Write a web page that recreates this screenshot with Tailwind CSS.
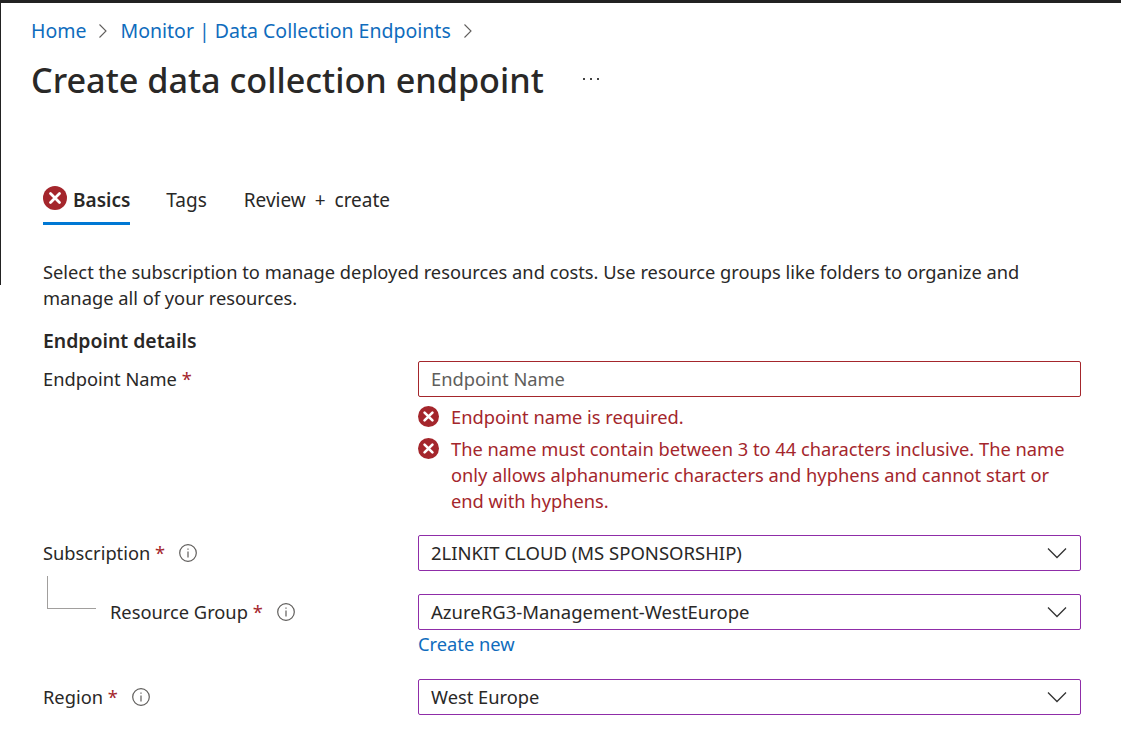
<!DOCTYPE html>
<html lang="en">

<head>
  <meta charset="UTF-8">
  <title>Create data collection endpoint</title>
  <script src="https://cdn.jsdelivr.net/npm/@tailwindcss/browser@4"></script>
</head>

<body class="bg-white overflow-hidden font-['Noto_Sans',sans-serif] text-[#292827] text-[18.3px] leading-[26px]">
  <div class="relative h-[747px] w-[1121px] overflow-hidden border-t-[3px] border-[#222222]">
    <!-- left edge of the window -->
    <div class="absolute left-0 top-0 h-[282px] w-px bg-[#222222]"></div>

    <!-- Breadcrumb -->
    <nav class="flex items-center h-[26px] mt-[15px] ml-[31px] text-[#0f6cbd] text-[19.500px]">
      <a>Home</a>
      <svg class="w-[12px] h-[16px] mx-[11px]" viewBox="0 0 12 16" fill="none" stroke="#605e5c" stroke-width="1.1"><path d="M2.5 1.5 9 8l-6.500 6.500" /></svg>
      <a>Monitor | Data Collection Endpoints</a>
      <svg class="w-[12px] h-[16px] ml-[11px]" viewBox="0 0 12 16" fill="none" stroke="#605e5c" stroke-width="1.1"><path d="M2.5 1.5 9 8l-6.500 6.500" /></svg>
    </nav>

    <!-- Title -->
    <div class="flex items-center mt-[12px] ml-[31px] h-[48px]">
      <h1 class="text-[34.200px] leading-[48px] font-medium">Create data collection endpoint</h1>
      <span class="ml-[39px] flex gap-[5px] mb-[2px]">
        <i class="w-[2px] h-[2px] bg-[#444]"></i><i class="w-[2px] h-[2px] bg-[#444]"></i><i class="w-[2px] h-[2px] bg-[#444]"></i>
      </span>
    </div>

    <!-- Tabs -->
    <div class="flex mt-[82px] ml-[43px] h-[39px] text-[19px]">
      <div class="flex gap-[6px] h-full border-b-[3px] border-[#0078d4] font-semibold">
        <svg class="w-[24px] h-[24px]" viewBox="0 0 24 24"><circle cx="12" cy="12" r="12" fill="#a4262c" /><path d="M7.500 7.500l9 9m0-9-9 9" stroke="#fff" stroke-width="2.800" stroke-linecap="round" /></svg>
        <span class="leading-[28px]">Basics</span>
      </div>
      <span class="ml-[36px] leading-[28px]">Tags</span>
      <span class="ml-[37px] leading-[28px] [word-spacing:4px]">Review + create</span>
    </div>

    <p class="mt-[34px] mx-[43px] w-[1000px]">Select the subscription to manage deployed resources and costs. Use resource groups like folders to organize and manage all of your resources.</p>

    <h2 class="mt-[17px] ml-[43px] font-semibold text-[19.400px]">Endpoint details</h2>

    <!-- Form -->
    <div class="grid grid-cols-[375px_663px] ml-[43px] mt-[7px]">
      <div class="pt-[5px]">Endpoint Name <span class="text-[#a4262c]">*</span></div>
      <div>
        <div class="h-[36px] border border-[#a4262c] rounded-[2px] px-3 leading-[33px] text-[#605e5c]">Endpoint Name</div>
        <div class="flex gap-[12px] mt-[7px] text-[#a4262c]">
          <svg class="w-[21px] h-[21px] shrink-0 mt-[2px]" viewBox="0 0 24 24"><circle cx="12" cy="12" r="12" fill="#a4262c" /><path d="M7.500 7.500l9 9m0-9-9 9" stroke="#fff" stroke-width="3" stroke-linecap="round" /></svg>
          <span>Endpoint name is required.</span>
        </div>
        <div class="flex gap-[12px] mt-[6px] text-[#a4262c]">
          <svg class="w-[21px] h-[21px] shrink-0 mt-[2px]" viewBox="0 0 24 24"><circle cx="12" cy="12" r="12" fill="#a4262c" /><path d="M7.500 7.500l9 9m0-9-9 9" stroke="#fff" stroke-width="3" stroke-linecap="round" /></svg>
          <span>The name must contain between 3 to 44 characters inclusive. The name only allows alphanumeric characters and hyphens and cannot start or end with hyphens.</span>
        </div>
      </div>

      <div class="flex items-start mt-[21px] pt-[5px]">
        <span>Subscription <span class="text-[#a4262c]">*</span></span>
        <svg class="w-[18px] h-[18px] ml-[14px] mt-[4px]" viewBox="0 0 18 18" fill="none"><circle cx="9" cy="9" r="8.300" stroke="#605e5c" stroke-width="1.200" /><path d="M9 7.500v6M9 4.500v1.300" stroke="#605e5c" stroke-width="1.200" /></svg>
      </div>
      <div class="mt-[21px] h-[36px] border border-[#8f2da8] rounded-[2px] px-3 flex items-center justify-between">
        <span class="text-[18.500px]">2LINKIT CLOUD (MS SPONSORSHIP)</span>
        <svg class="w-[20px] h-[12px] mr-[1px]" viewBox="0 0 20 12" fill="none" stroke="#333" stroke-width="1.300"><path d="M1 1.500 10 10.500 19 1.500" /></svg>
      </div>

      <div class="relative flex items-start mt-[23px] pt-[5px] pl-[67px]">
        <div class="absolute left-[4px] top-[-18px] w-[49px] h-[33px] border-l border-b border-[#a19f9d]"></div>
        <span>Resource Group <span class="text-[#a4262c]">*</span></span>
        <svg class="w-[18px] h-[18px] ml-[14px] mt-[4px]" viewBox="0 0 18 18" fill="none"><circle cx="9" cy="9" r="8.300" stroke="#605e5c" stroke-width="1.200" /><path d="M9 7.500v6M9 4.500v1.300" stroke="#605e5c" stroke-width="1.200" /></svg>
      </div>
      <div class="mt-[23px]">
        <div class="h-[36px] border border-[#8f2da8] rounded-[2px] px-3 flex items-center justify-between">
          <span class="text-[18.500px]">AzureRG3-Management-WestEurope</span>
          <svg class="w-[20px] h-[12px] mr-[1px]" viewBox="0 0 20 12" fill="none" stroke="#333" stroke-width="1.300"><path d="M1 1.500 10 10.500 19 1.500" /></svg>
        </div>
        <a class="block mt-[1px] text-[#0f6cbd]">Create new</a>
      </div>

      <div class="flex items-start mt-[22px] pt-[5px]">
        <span>Region <span class="text-[#a4262c]">*</span></span>
        <svg class="w-[18px] h-[18px] ml-[14px] mt-[4px]" viewBox="0 0 18 18" fill="none"><circle cx="9" cy="9" r="8.300" stroke="#605e5c" stroke-width="1.200" /><path d="M9 7.500v6M9 4.500v1.300" stroke="#605e5c" stroke-width="1.200" /></svg>
      </div>
      <div class="mt-[22px] h-[36px] border border-[#8f2da8] rounded-[2px] px-3 flex items-center justify-between">
        <span>West Europe</span>
        <svg class="w-[20px] h-[12px] mr-[1px]" viewBox="0 0 20 12" fill="none" stroke="#333" stroke-width="1.300"><path d="M1 1.500 10 10.500 19 1.500" /></svg>
      </div>
    </div>
  </div>
</body>

</html>
